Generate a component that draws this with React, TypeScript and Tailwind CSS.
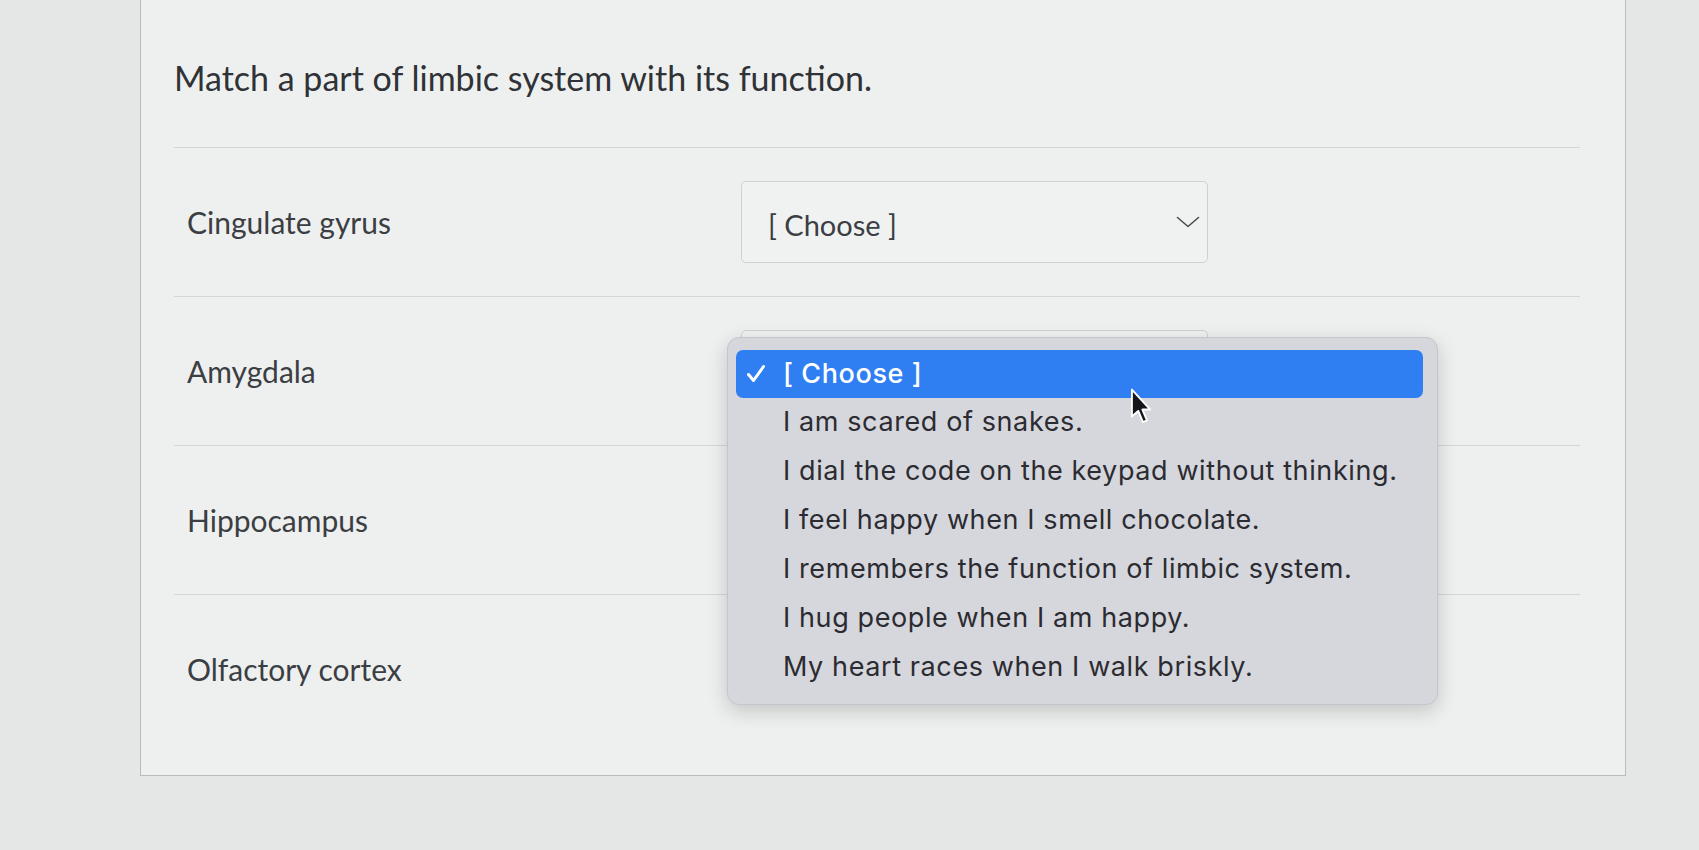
import React from 'react';

const parts = ['Cingulate gyrus', 'Amygdala', 'Hippocampus', 'Olfactory cortex'];

const options = [
  '[ Choose ]',
  'I am scared of snakes.',
  'I dial the code on the keypad without thinking.',
  'I feel happy when I smell chocolate.',
  'I remembers the function of limbic system.',
  'I hug people when I am happy.',
  'My heart races when I walk briskly.',
];

function Cursor() {
  return (
    <svg width="26" height="38" viewBox="0 0 16 24" className="absolute left-[1130px] top-[388px] z-20">
      <path
        d="M1 1 L1 18 L5 14.5 L8 21.5 L10.5 20.5 L7.6 13.6 L12.6 13.6 Z"
        fill="#15161a"
        stroke="#fff"
        strokeWidth="1.2"
        strokeLinejoin="round"
      />
    </svg>
  );
}

function SelectBox({ hidden }: { hidden?: boolean }) {
  return (
    <div className="flex h-[82px] w-[467px] items-center justify-between rounded-[5px] border border-[#cdd1d3] bg-[#f0f2f2] pl-[26px] pr-[7px] text-[29px] text-[#3b3e42]">
      <span className={hidden ? 'invisible pt-[6px]' : 'pt-[6px]'}>[ Choose ]</span>
      <svg width="24" height="12" viewBox="0 0 24 12" className={hidden ? 'invisible' : ''}>
        <polyline points="1.5,1.5 12,10.5 22.5,1.5" fill="none" stroke="#4a4d52" strokeWidth="1.6" strokeLinecap="round" strokeLinejoin="round" />
      </svg>
    </div>
  );
}

function Dropdown() {
  return (
    <div className="absolute left-[727px] top-[337px] z-10 w-[711px] rounded-[12px] border border-[#c3c6cc] bg-[#d5d7dc] pb-[12px] pl-[8px] pr-[14px] pt-[12px] shadow-[0_6px_20px_rgba(0,0,0,0.18)] font-['Inter',sans-serif]">
      {options.map((o, i) => (
        <div
          key={o}
          className={
            i === 0
              ? 'flex h-[48px] items-center rounded-[7px] bg-[#2f7ff2] text-[27px] font-medium tracking-[0.6px] text-white'
              : 'flex h-[49px] items-center text-[27px] tracking-[0.6px] text-[#2c2b31]'
          }
        >
          <span className="flex w-[47px] justify-start pl-[10px]">
            {i === 0 ? (
              <svg width="20" height="20" viewBox="0 0 20 20">
                <polyline points="2.5,10.5 7.5,16.5 17.5,2.5" fill="none" stroke="#fff" strokeWidth="3" strokeLinecap="round" strokeLinejoin="round" />
              </svg>
            ) : null}
          </span>
          <span>{o}</span>
        </div>
      ))}
    </div>
  );
}

export default function App() {
  return (
    <div className="relative h-[850px] w-[1699px] overflow-hidden bg-[#e5e7e7] font-['Lato',sans-serif]">
      <div className="ml-[140px] h-[776px] w-[1486px] border-x border-b border-[#b9bcbe] bg-[#eef0f0] pl-[33px] pr-[45px]">
        <div className="pt-[52px] text-[34px] text-[#2f3236]">Match a part of limbic system with its function.</div>
        <div className="mt-[44px]">
          {parts.map((p, i) => (
            <div key={p} className="flex h-[149px] items-center border-t border-[#d3d6d8]">
              <div className="w-[567px] pl-[13px] text-[30px] text-[#3b3e42]">{p}</div>
              {i === 0 ? <SelectBox /> : i < 3 ? <SelectBox hidden /> : <div />}
            </div>
          ))}
        </div>
      </div>
      <Dropdown />
      <Cursor />
    </div>
  );
}
